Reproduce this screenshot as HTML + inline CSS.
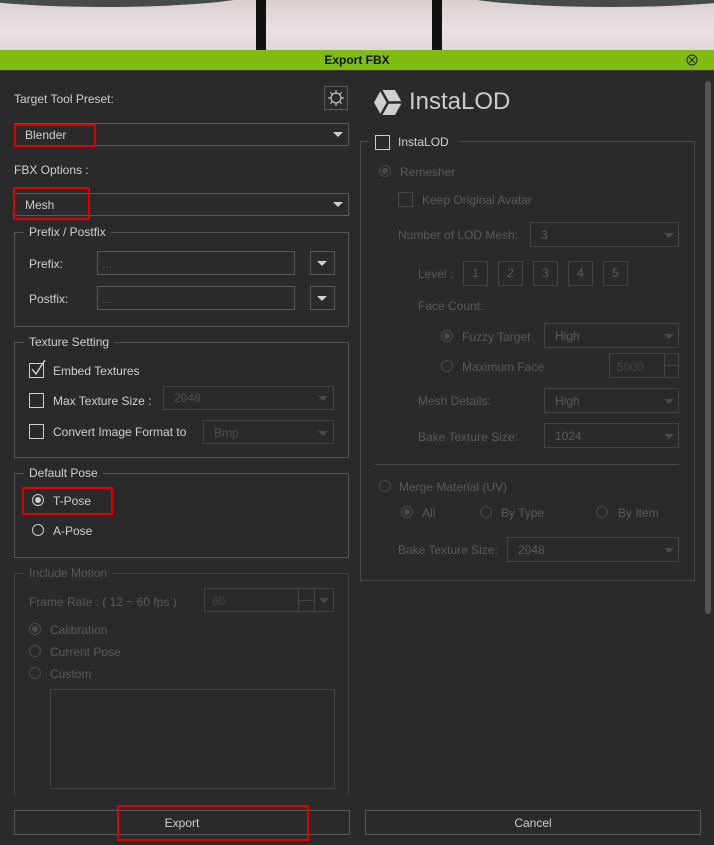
<!DOCTYPE html>
<html><head><meta charset="utf-8">
<style>
*{margin:0;padding:0;box-sizing:border-box}
body{width:714px;height:845px;overflow:hidden;background:#2a2a2a;font-family:"Liberation Sans",sans-serif;font-size:12px;color:#d0d0d0;position:relative}
.a{position:absolute}
.t{position:absolute;height:16px;line-height:16px;white-space:nowrap}
.d{color:#5a5a5a}
.b{position:absolute;border:1px solid #5a5a5a}
.bd{position:absolute;border:1px solid #444}
.g{position:absolute;border:1px solid #555}
.lg{position:absolute;background:#2a2a2a;padding:0 5px;height:16px;line-height:16px;white-space:nowrap}
.cb{position:absolute;width:15px;height:15px;border:1px solid #cfcfcf}
.cbd{position:absolute;width:15px;height:15px;border:1px solid #4a4a4a}
.rd{position:absolute;width:12px;height:12px;border:1px solid #cfcfcf;border-radius:50%}
.rdd{position:absolute;width:12px;height:12px;border:1px solid #4a4a4a;border-radius:50%}
.dot{position:absolute;left:2px;top:2px;width:6px;height:6px;border-radius:50%;background:#cfcfcf}
.dotd{position:absolute;left:2px;top:2px;width:6px;height:6px;border-radius:50%;background:#4a4a4a}
.arr{position:absolute;width:0;height:0;border-left:5px solid transparent;border-right:5px solid transparent;border-top:5px solid #d0d0d0}
.arrd{position:absolute;width:0;height:0;border-left:5px solid transparent;border-right:5px solid transparent;border-top:5px solid #4a4a4a}
.red{position:absolute;border:2px solid #e00000}
</style></head><body>
<div class="a" style="left:0;top:0;width:714px;height:50px;background:linear-gradient(180deg,#d8cfcf,#e9e2e2 60%,#e0d8d8)"></div>
<div class="a" style="left:-60px;top:-30px;width:330px;height:37px;border-radius:50%;background:#484a4a"></div>
<div class="a" style="left:440px;top:-30px;width:340px;height:37px;border-radius:50%;background:#484a4a"></div>
<div class="a" style="left:256px;top:0;width:10px;height:50px;background:#111"></div>
<div class="a" style="left:432px;top:0;width:10px;height:50px;background:#111"></div>
<div class="a" style="left:0;top:50px;width:714px;height:20px;background:#7fbb10"></div>
<div class="a" style="left:0;top:50px;width:714px;height:20px;line-height:20px;text-align:center;color:#111;font-weight:bold;font-size:12px">Export FBX</div>
<svg class="a" style="left:686px;top:54px" width="12" height="12"><circle cx="6" cy="6" r="5" fill="none" stroke="#222"/><path d="M3.5 3.5L8.5 8.5M8.5 3.5L3.5 8.5" stroke="#222"/></svg>
<div class="a" style="left:0;top:70px;width:714px;height:1px;background:#3a3a3a"></div>
<div class="a" style="left:705px;top:81px;width:6px;height:533px;background:#555;border-radius:3px"></div>

<div class="t" style="left:14px;top:91px">Target Tool Preset:</div>
<div class="b" style="left:324px;top:86px;width:24px;height:24px"></div>
<svg class="a" style="left:324px;top:86px" width="24" height="24"><circle cx="12" cy="12" r="5" fill="none" stroke="#ddd" stroke-width="1"/><g stroke="#ddd"><path d="M12 4v3M12 17v3M4 12h3M17 12h3M6.3 6.3l2 2M15.7 15.7l2 2M6.3 17.7l2-2M15.7 8.3l2-2"/></g></svg>

<svg class="a" style="left:374px;top:89px" width="30" height="27" viewBox="0 0 30 27"><path d="M7 1H21L28 13.5L21 26H7L0 13.5Z" fill="#cfcfcf"/><path d="M14 13.5L7 1M14 13.5L28 13.5M14 13.5L7 26" stroke="#2a2a2a" stroke-width="2.5"/></svg>
<div class="t" style="left:409px;top:88px;height:28px;line-height:28px;font-size:24px;color:#cccccc">InstaLOD</div>

<div class="b" style="left:14px;top:123px;width:335px;height:23px"></div>
<div class="t" style="left:25px;top:127px">Blender</div>
<div class="arr" style="left:333px;top:132px"></div>
<div class="red" style="left:14px;top:124px;width:82px;height:23px"></div>

<div class="t" style="left:14px;top:162px">FBX Options :</div>
<div class="b" style="left:14px;top:193px;width:335px;height:23px"></div>
<div class="t" style="left:25px;top:197px">Mesh</div>
<div class="arr" style="left:333px;top:202px"></div>
<div class="red" style="left:13px;top:187px;width:77px;height:33px"></div>

<div class="g" style="left:14px;top:232px;width:335px;height:95px"></div>
<div class="lg" style="left:24px;top:224px">Prefix / Postfix</div>
<div class="t" style="left:29px;top:256px">Prefix:</div>
<div class="b" style="left:97px;top:251px;width:198px;height:24px"></div>
<div class="t d" style="left:102px;top:256px;color:#555">...</div>
<div class="b" style="left:310px;top:251px;width:25px;height:24px"></div>
<div class="arr" style="left:317px;top:261px"></div>
<div class="t" style="left:29px;top:291px">Postfix:</div>
<div class="b" style="left:97px;top:286px;width:198px;height:24px"></div>
<div class="t d" style="left:102px;top:291px;color:#555">...</div>
<div class="b" style="left:310px;top:286px;width:25px;height:24px"></div>
<div class="arr" style="left:317px;top:296px"></div>

<div class="g" style="left:14px;top:342px;width:335px;height:116px"></div>
<div class="lg" style="left:24px;top:334px">Texture Setting</div>
<div class="cb" style="left:29px;top:363px"></div>
<svg class="a" style="left:29px;top:358px" width="20" height="20"><path d="M3 11L7 16L16 2" fill="none" stroke="#ddd" stroke-width="1.3"/></svg>
<div class="t" style="left:53px;top:363px">Embed Textures</div>
<div class="cb" style="left:29px;top:393px"></div>
<div class="t" style="left:53px;top:393px">Max Texture Size :</div>
<div class="bd" style="left:163px;top:386px;width:171px;height:24px"></div>
<div class="t d" style="left:174px;top:390px;color:#4e4e4e">2048</div>
<div class="arrd" style="left:318px;top:396px"></div>
<div class="cb" style="left:29px;top:424px"></div>
<div class="t" style="left:53px;top:424px">Convert Image Format to</div>
<div class="bd" style="left:203px;top:420px;width:131px;height:24px"></div>
<div class="t d" style="left:214px;top:425px;color:#4e4e4e">Bmp</div>
<div class="arrd" style="left:318px;top:431px"></div>

<div class="g" style="left:14px;top:473px;width:335px;height:85px"></div>
<div class="lg" style="left:24px;top:465px">Default Pose</div>
<div class="rd" style="left:32px;top:494px"><div class="dot"></div></div>
<div class="t" style="left:53px;top:493px">T-Pose</div>
<div class="red" style="left:22px;top:487px;width:91px;height:28px"></div>
<div class="rd" style="left:32px;top:524px"></div>
<div class="t" style="left:53px;top:523px">A-Pose</div>

<div class="a" style="left:14px;top:573px;width:335px;height:223px;border:1px solid #444;border-bottom:none"></div>
<div class="lg d" style="left:24px;top:565px">Include Motion</div>
<div class="t d" style="left:29px;top:594px">Frame Rate : ( 12 ~ 60 fps )</div>
<div class="bd" style="left:204px;top:588px;width:130px;height:24px"></div>
<div class="a" style="left:298px;top:588px;width:1px;height:24px;background:#444"></div>
<div class="a" style="left:314px;top:588px;width:1px;height:24px;background:#444"></div>
<div class="a" style="left:298px;top:600px;width:16px;height:1px;background:#444"></div>
<div class="t d" style="left:212px;top:593px;color:#444">60</div>
<div class="arrd" style="left:319px;top:598px"></div>
<div class="rdd" style="left:29px;top:623px"><div class="dotd"></div></div>
<div class="t d" style="left:50px;top:622px">Calibration</div>
<div class="rdd" style="left:29px;top:645px"></div>
<div class="t d" style="left:50px;top:644px">Current Pose</div>
<div class="rdd" style="left:29px;top:667px"></div>
<div class="t d" style="left:50px;top:666px">Custom</div>
<div class="bd" style="left:50px;top:689px;width:285px;height:100px"></div>

<div class="b" style="left:14px;top:810px;width:336px;height:25px;line-height:24px;text-align:center;font-size:12px">Export</div>
<div class="red" style="left:117px;top:805px;width:192px;height:36px"></div>
<div class="b" style="left:365px;top:810px;width:336px;height:25px;line-height:24px;text-align:center">Cancel</div>

<div class="a" style="left:360px;top:141px;width:335px;height:440px;border:1px solid #4a4a4a"></div>
<div class="lg" style="left:369px;top:134px;width:90px"></div>
<div class="cb" style="left:375px;top:135px"></div>
<div class="t" style="left:398px;top:134px">InstaLOD</div>
<div class="rdd" style="left:379px;top:165px"><div class="dotd"></div></div>
<div class="t d" style="left:400px;top:164px">Remesher</div>
<div class="cbd" style="left:398px;top:192px"></div>
<div class="t d" style="left:422px;top:192px">Keep Original Avatar</div>
<div class="t d" style="left:398px;top:227px">Number of LOD Mesh:</div>
<div class="bd" style="left:530px;top:222px;width:149px;height:25px"></div>
<div class="t d" style="left:541px;top:227px">3</div>
<div class="arrd" style="left:664px;top:233px"></div>
<div class="t d" style="left:418px;top:266px">Level :</div>
<div class="bd" style="left:463px;top:261px;width:25px;height:25px;text-align:center;line-height:23px;color:#5a5a5a">1</div>
<div class="bd" style="left:498px;top:261px;width:25px;height:25px;text-align:center;line-height:23px;color:#5a5a5a">2</div>
<div class="bd" style="left:533px;top:261px;width:25px;height:25px;text-align:center;line-height:23px;color:#5a5a5a">3</div>
<div class="bd" style="left:568px;top:261px;width:25px;height:25px;text-align:center;line-height:23px;color:#5a5a5a">4</div>
<div class="bd" style="left:603px;top:261px;width:25px;height:25px;text-align:center;line-height:23px;color:#5a5a5a">5</div>
<div class="t d" style="left:418px;top:298px">Face Count:</div>
<div class="rdd" style="left:441px;top:330px"><div class="dotd"></div></div>
<div class="t d" style="left:462px;top:329px">Fuzzy Target</div>
<div class="bd" style="left:544px;top:323px;width:135px;height:25px"></div>
<div class="t d" style="left:555px;top:328px">High</div>
<div class="arrd" style="left:664px;top:334px"></div>
<div class="rdd" style="left:441px;top:360px"></div>
<div class="t d" style="left:462px;top:359px">Maximum Face</div>
<div class="bd" style="left:609px;top:353px;width:70px;height:25px"></div>
<div class="a" style="left:664px;top:353px;width:1px;height:25px;background:#444"></div>
<div class="a" style="left:664px;top:365px;width:15px;height:1px;background:#444"></div>
<div class="t" style="left:617px;top:359px;color:#444">5000</div>
<div class="t d" style="left:418px;top:393px">Mesh Details:</div>
<div class="bd" style="left:544px;top:388px;width:135px;height:25px"></div>
<div class="t d" style="left:555px;top:393px">High</div>
<div class="arrd" style="left:664px;top:399px"></div>
<div class="t d" style="left:418px;top:429px">Bake Texture Size:</div>
<div class="bd" style="left:544px;top:423px;width:135px;height:25px"></div>
<div class="t d" style="left:555px;top:428px">1024</div>
<div class="arrd" style="left:664px;top:434px"></div>
<div class="a" style="left:375px;top:464px;width:304px;height:1px;background:#4a4a4a"></div>
<div class="rdd" style="left:379px;top:480px"></div>
<div class="t d" style="left:399px;top:479px">Merge Material (UV)</div>
<div class="rdd" style="left:401px;top:506px"><div class="dotd"></div></div>
<div class="t d" style="left:422px;top:505px">All</div>
<div class="rdd" style="left:480px;top:506px"></div>
<div class="t d" style="left:501px;top:505px">By Type</div>
<div class="rdd" style="left:596px;top:506px"></div>
<div class="t d" style="left:618px;top:505px">By Item</div>
<div class="t d" style="left:398px;top:542px">Bake Texture Size:</div>
<div class="bd" style="left:507px;top:537px;width:172px;height:25px"></div>
<div class="t d" style="left:518px;top:542px">2048</div>
<div class="arrd" style="left:664px;top:548px"></div>
</body></html>
